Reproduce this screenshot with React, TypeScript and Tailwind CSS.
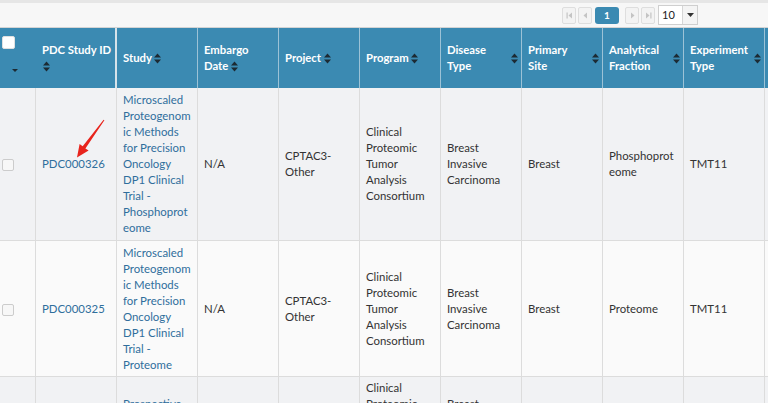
import React from "react"

const font = { fontFamily: 'Lato, "Liberation Sans", sans-serif' }

type Col = { label: string; mode: "inline" | "below" | "side" }

const columns: Col[] = [
  { label: "PDC Study ID", mode: "below" },
  { label: "Study", mode: "inline" },
  { label: "Embargo Date", mode: "inline" },
  { label: "Project", mode: "inline" },
  { label: "Program", mode: "inline" },
  { label: "Disease Type", mode: "side" },
  { label: "Primary Site", mode: "side" },
  { label: "Analytical Fraction", mode: "side" },
  { label: "Experiment Type", mode: "side" },
]

type Row = { id: string; study: string; fraction: string; height: string; bg: string }

const rows: Row[] = [
  {
    id: "PDC000326",
    study: "Microscaled Proteogenomic Methods for Precision Oncology DP1 Clinical Trial - Phosphoproteome",
    fraction: "Phosphoproteome",
    height: "h-[153px]",
    bg: "bg-[#f1f2f4]",
  },
  {
    id: "PDC000325",
    study: "Microscaled Proteogenomic Methods for Precision Oncology DP1 Clinical Trial - Proteome",
    fraction: "Proteome",
    height: "h-[136px]",
    bg: "bg-[#fafafa]",
  },
  {
    id: "PDC000120",
    study: "Prospective Breast BRCA Proteome",
    fraction: "Proteome",
    height: "h-[86px]",
    bg: "bg-[#f1f2f4]",
  },
]

function SortIcon() {
  return (
    <svg width="7" height="11" viewBox="0 0 7 11" className="inline-block shrink-0 align-[-2px]">
      <path d="M3.5 0.5 L7 4.5 L0 4.5 Z" fill="#1c2a33" />
      <path d="M3.5 10.5 L7 6.5 L0 6.5 Z" fill="#1c2a33" />
    </svg>
  )
}

function PagerButton({ kind }: { kind: "first" | "prev" | "next" | "last" }) {
  return (
    <div className="flex h-[17px] w-[14px] items-center justify-center rounded-[2px] border border-[#dedede] bg-[#f3f3f3]">
      <svg width="7" height="7" viewBox="0 0 7 7">
        {kind === "first" && (
          <>
            <rect x="0.5" y="0.5" width="1.2" height="6" fill="#c4c4c4" />
            <path d="M6 0.5 L2.5 3.5 L6 6.5 Z" fill="#c4c4c4" />
          </>
        )}
        {kind === "prev" && <path d="M5 0.5 L1.5 3.5 L5 6.5 Z" fill="#c4c4c4" />}
        {kind === "next" && <path d="M2 0.5 L5.5 3.5 L2 6.5 Z" fill="#c4c4c4" />}
        {kind === "last" && (
          <>
            <path d="M1 0.5 L4.5 3.5 L1 6.5 Z" fill="#c4c4c4" />
            <rect x="5.3" y="0.5" width="1.2" height="6" fill="#c4c4c4" />
          </>
        )}
      </svg>
    </div>
  )
}

function Cell({ children, className = "" }: { children?: React.ReactNode; className?: string }) {
  return (
    <div className={`flex w-[81px] shrink-0 items-center border-r border-[#dcdcdc] pl-[6px] pr-[5px] ${className}`}>
      <div className="w-full break-words">{children}</div>
    </div>
  )
}

export default function App() {
  return (
    <div className="relative h-[403px] w-[768px] overflow-hidden bg-white text-[11.4px] leading-[16px]" style={font}>
      {/* Toolbar with pager */}
      <div className="flex h-[28px] items-center border-t-[3px] border-b border-t-[#e6e6e6] border-b-[#d4d4d4] bg-[#f7f7f7] pl-[562px]">
        <div className="flex items-center gap-[2px]">
          <PagerButton kind="first" />
          <PagerButton kind="prev" />
          <div className="mx-[1px] flex h-[17px] w-[24px] items-center justify-center rounded-[3px] bg-[#3b8ab2] text-[10px] font-bold text-white">
            1
          </div>
          <div className="w-[1px]" />
          <PagerButton kind="next" />
          <PagerButton kind="last" />
        </div>
        <div className="ml-[3px] flex h-[20px] w-[40px] items-stretch border border-[#cfcfcf] bg-white">
          <div className="flex flex-1 items-center pl-[3px] text-[11px] text-[#222]">10</div>
          <div className="flex w-[15px] items-center justify-center border-l border-[#d6d6d6] bg-[#f4f4f4]">
            <svg width="7" height="4" viewBox="0 0 7 4">
              <path d="M0 0 L7 0 L3.5 4 Z" fill="#333" />
            </svg>
          </div>
        </div>
      </div>

      {/* Header */}
      <div className="flex h-[60px] bg-[#3b8ab2] text-[11.3px] font-bold text-white">
        <div className="flex w-[36px] shrink-0 flex-col pl-[2px] pt-[8px]">
          <div className="h-[13px] w-[13px] rounded-[2px] border border-[#e0e0e0] bg-white" />
          <svg width="6" height="3" viewBox="0 0 6 3" className="ml-[10px] mt-[20px]">
            <path d="M0 0 L6 0 L3 3 Z" fill="#1c2a33" />
          </svg>
        </div>
        {columns.map((c, i) => (
          <div
            key={c.label}
            className={`flex w-[81px] shrink-0 items-center pl-[6px] pr-[3px] ${
              i === 0 ? "border-r-2 border-[#d6e3ea]" : "border-r border-[#9cc2d6]"
            }`}
          >
            {c.mode === "inline" && (
              <div>
                <span>{c.label}</span> <SortIcon />
              </div>
            )}
            {c.mode === "below" && (
              <div>
                <div className="whitespace-nowrap">{c.label}</div>
                <div className="flex h-[16px] items-center pl-[1px]">
                  <SortIcon />
                </div>
              </div>
            )}
            {c.mode === "side" && (
              <div className="flex items-center gap-[4px]">
                <span>{c.label}</span>
                <SortIcon />
              </div>
            )}
          </div>
        ))}
        <div className="w-[81px] shrink-0" />
      </div>

      {/* Body rows */}
      {rows.map((r) => (
        <div key={r.id} className={`flex ${r.height} border-b border-[#dcdcdc] ${r.bg} text-[#333]`}>
          <div className="flex w-[36px] shrink-0 items-center border-r border-[#dcdcdc] pl-[2px] pt-[2px]">
            <div className="h-[12px] w-[12px] rounded-[2px] border border-[#cccccc] bg-[#f7f7f7]" />
          </div>
          <Cell>
            <span className="text-[#2f6e9c]">{r.id}</span>
          </Cell>
          <Cell>
            <span className="text-[#2f6e9c]">{r.study}</span>
          </Cell>
          <Cell>N/A</Cell>
          <Cell>CPTAC3-Other</Cell>
          <Cell>Clinical Proteomic Tumor Analysis Consortium</Cell>
          <Cell>Breast Invasive Carcinoma</Cell>
          <Cell>Breast</Cell>
          <Cell>{r.fraction}</Cell>
          <Cell>TMT11</Cell>
          <Cell />
        </div>
      ))}

      {/* Red annotation arrow */}
      <svg className="pointer-events-none absolute left-0 top-0" width="768" height="403">
        <polygon
          points="104.4,120.3 85.4,148.4 88.6,150.6 77,157.5 79.6,144 82.7,146.3 103.6,119.7"
          fill="#e8241c"
        />
      </svg>
    </div>
  )
}
